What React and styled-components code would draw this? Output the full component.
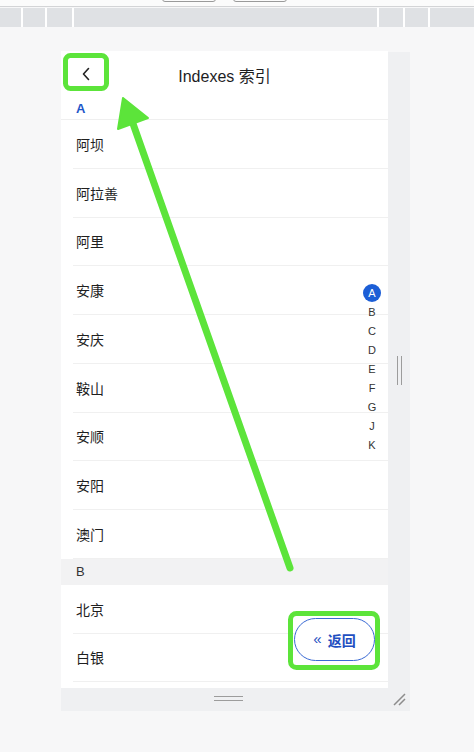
import React from 'react';
import styled, { createGlobalStyle } from 'styled-components';

const GlobalStyle = createGlobalStyle`
    html, body {
        margin: 0;
        padding: 0;
        background: #f7f7f8;
    }
    body {
        font-family: "Liberation Sans", "Noto Sans CJK SC", sans-serif;
        color: #222;
    }
`;

const Page = styled.div`
    position: relative;
    width: 474px;
    height: 752px;
    overflow: hidden;
`;

const TabStrip = styled.div`
    height: 6px;
    background: #fbfbfb;
    border-bottom: 1px solid #d3d4d6;
    position: relative;
`;

const Tab = styled.div`
    position: absolute;
    top: -6px;
    left: ${props => props.left}px;
    width: 54px;
    height: 8px;
    border: 1px solid #9a9a9a;
    border-radius: 0 0 3px 3px;
    box-sizing: border-box;
`;

const Toolbar = styled.div`
    margin-top: 1px;
    height: 19px;
    display: grid;
    grid-template-columns: 21px 22px 25px 1fr 24px 23px 44px;
    column-gap: 2px;
    background: #ffffff;
`;

const ToolCell = styled.div`
    background: #dfe1e4;
`;

const Stage = styled.div`
    padding: 24px 0 0 61px;
`;

const Frame = styled.div`
    display: grid;
    grid-template-columns: 327px 22px;
    grid-template-rows: 637px 23px;
    width: 349px;
`;

const Phone = styled.div`
    position: relative;
    background: #fff;
    overflow: hidden;
`;

const SideGutter = styled.div`
    background: #eff0f2;
    display: flex;
    justify-content: center;
    padding-top: 304px;
    margin-top: 1px;
`;

const BottomGutter = styled.div`
    grid-column: 1 / span 2;
    background: #eff0f2;
    position: relative;
    display: flex;
    justify-content: center;
    padding: 8px 0 0 0;
`;

const VHandle = styled.div`
    width: 5px;
    height: 29px;
    border-left: 1.5px solid #9c9c9c;
    border-right: 1.5px solid #9c9c9c;
    box-sizing: border-box;
`;

const HHandle = styled.div`
    width: 29px;
    height: 5px;
    margin-left: -14px;
    border-top: 1.5px solid #9c9c9c;
    border-bottom: 1.5px solid #9c9c9c;
    box-sizing: border-box;
`;

const Grip = styled.svg`
    position: absolute;
    right: 4px;
    bottom: 5px;
`;

const Header = styled.div`
    height: 46px;
    display: grid;
    grid-template-columns: 46px 1fr 46px;
    align-items: center;
`;

const BackButton = styled.div`
    display: flex;
    justify-content: center;
    align-items: center;
    padding-left: 4px;
`;

const Title = styled.div`
    text-align: center;
    font-size: 16px;
    color: #1d1d1f;
    padding-top: 1px;
`;

const Anchor = styled.div`
    height: ${props => props.muted ? 26 : 23}px;
    display: flex;
    align-items: center;
    padding-left: 15px;
    font-size: 13px;
    font-weight: ${props => props.muted ? 400 : 700};
    color: ${props => props.muted ? '#333' : '#1f57c9'};
    background: ${props => props.muted ? '#f2f2f3' : '#fff'};
    border-bottom: ${props => props.muted ? 'none' : '1px solid #efefef'};
    box-sizing: border-box;
`;

const Row = styled.div`
    height: 48.75px;
    margin-left: 12px;
    padding-left: 3px;
    display: flex;
    align-items: center;
    font-size: 14px;
    color: #1f1f1f;
    border-bottom: 1px solid #f0f0f0;
    box-sizing: border-box;
`;

const IndexBar = styled.ul`
    position: absolute;
    right: 7px;
    top: 233px;
    margin: 0;
    padding: 0;
    list-style: none;
    display: flex;
    flex-direction: column;
    align-items: center;
`;

const IndexItem = styled.li`
    width: 18px;
    height: 18px;
    margin-bottom: 1px;
    border-radius: 50%;
    display: flex;
    align-items: center;
    justify-content: center;
    font-size: 11px;
    color: ${props => props.active ? '#fff' : '#333'};
    background: ${props => props.active ? '#1c5ed6' : 'transparent'};
`;

const ReturnButton = styled.div`
    position: absolute;
    right: 13px;
    bottom: 27px;
    width: 81px;
    height: 43px;
    box-sizing: border-box;
    border: 1px solid #3a6ad4;
    border-radius: 22px;
    background: #fff;
    display: flex;
    align-items: center;
    justify-content: center;
    gap: 6px;
    color: #1f4fc1;
    font-size: 14px;
    font-weight: 700;
`;

const Chevrons = styled.span`
    font-size: 15px;
    font-weight: 400;
    margin-top: -2px;
`;

const Annotations = styled.svg`
    position: absolute;
    left: 0;
    top: 0;
    pointer-events: none;
`;

const groupA = ['阿坝', '阿拉善', '阿里', '安康', '安庆', '鞍山', '安顺', '安阳', '澳门'];
const groupB = ['北京', '白银'];
const letters = ['A', 'B', 'C', 'D', 'E', 'F', 'G', 'J', 'K'];

const GREEN = '#5ce43a';

const App = () => (
    <Page>
        <GlobalStyle />
        <TabStrip>
            <Tab left={162} />
            <Tab left={233} />
        </TabStrip>
        <Toolbar>
            {Array.from({ length: 7 }).map((_, i) => <ToolCell key={i} />)}
        </Toolbar>
        <Stage>
            <Frame>
                <Phone>
                    <Header>
                        <BackButton>
                            <svg width="10" height="14" viewBox="0 0 10 14">
                                <path d="M7.5 1.5 L2.5 7 L7.5 12.5" fill="none" stroke="#222" strokeWidth="1.6" strokeLinecap="round" strokeLinejoin="round" />
                            </svg>
                        </BackButton>
                        <Title>Indexes 索引</Title>
                        <div />
                    </Header>
                    <Anchor>A</Anchor>
                    {groupA.map(name => <Row key={name}>{name}</Row>)}
                    <Anchor muted>B</Anchor>
                    {groupB.map(name => <Row key={name}>{name}</Row>)}
                    <IndexBar>
                        {letters.map((l, i) => <IndexItem key={l} active={i === 0}>{l}</IndexItem>)}
                    </IndexBar>
                    <ReturnButton>
                        <Chevrons>«</Chevrons>
                        <span>返回</span>
                    </ReturnButton>
                </Phone>
                <SideGutter>
                    <VHandle />
                </SideGutter>
                <BottomGutter>
                    <HHandle />
                    <Grip width="14" height="14" viewBox="0 0 14 14">
                        <path d="M2 13 L13 2 M7 13 L13 7" stroke="#8c8c8c" strokeWidth="1.5" />
                    </Grip>
                </BottomGutter>
            </Frame>
        </Stage>
        <Annotations width="474" height="752" viewBox="0 0 474 752">
            <rect x="65.5" y="55.5" width="41" height="33" rx="5" fill="none" stroke={GREEN} strokeWidth="5" />
            <rect x="290.5" y="613.5" width="87" height="54" rx="6" fill="none" stroke={GREEN} strokeWidth="5" />
            <line x1="290" y1="568" x2="131" y2="118" stroke={GREEN} strokeWidth="7" strokeLinecap="round" />
            <polygon points="123,98 148,118 118,129" fill={GREEN} stroke={GREEN} strokeWidth="2" strokeLinejoin="round" />
        </Annotations>
    </Page>
);

export default App;
